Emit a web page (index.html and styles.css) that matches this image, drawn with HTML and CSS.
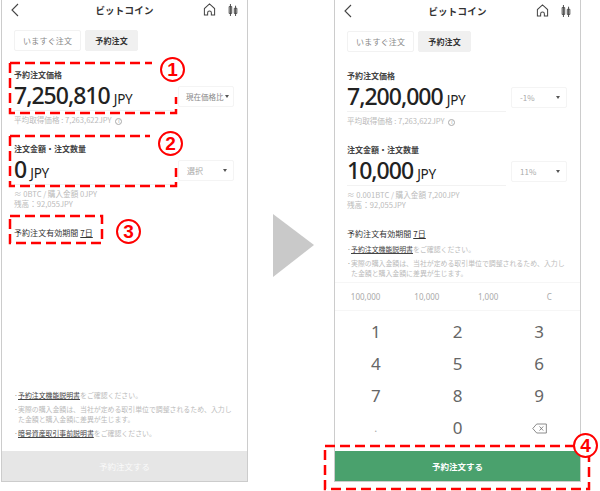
FILE: index.html
```html
<!DOCTYPE html>
<html lang="ja">
<head>
<meta charset="utf-8">
<title>ビットコイン 予約注文</title>
<link rel="stylesheet" href="styles.css">
</head>
<body>
<main class="stage">
  <section class="phone phone-a">
    <header class="nav">
      <svg class="back" viewBox="0 0 10 14"><path d="M8 1 2 7l6 6"/></svg>
      <h1 class="title">ビットコイン</h1>
      <div class="nav-icons">
        <svg class="home" viewBox="0 0 14 14"><path d="M1.500 13V6L7 1l5.500 5v7h-3.500v-2.500a2 2 0 0 0-4 0V13z"/></svg>
        <svg class="chart" viewBox="0 0 14 14"><path d="M4 0v14M10 2v12M2.500 3h3v8h-3zM8.500 5h3v6h-3z"/></svg>
      </div>
    </header>
    <div class="tabs"><span class="tab">いますぐ注文</span><span class="tab tab-on">予約注文</span></div>
    <div class="field field-price">
      <div class="label">予約注文価格</div>
      <div class="row">
        <div class="value"><b>7,250,810</b> <span>JPY</span></div>
        <div class="select select-narrow">現在価格比<i></i></div>
      </div>
      <div class="sub">平均取得価格 : 7,263,622JPY <em>i</em></div>
    </div>
    <div class="field field-amount">
      <div class="label">注文金額・注文数量</div>
      <div class="row">
        <div class="value"><b>0</b> <span>JPY</span></div>
        <div class="select">選択<i></i></div>
      </div>
      <div class="sub sub-tall">≈ 0BTC / 購入金額 0JPY<br>残高：92,055JPY</div>
    </div>
    <div class="period">予約注文有効期間 <u>7日</u></div>
    <ul class="notes notes-bottom">
      <li><u>予約注文機能説明書</u>をご確認ください。</li>
      <li>実際の購入金額は、当社が定める取引単位で調整されるため、入力した金額と購入金額に差異が生じます。</li>
      <li><u>暗号資産取引事前説明書</u>をご確認ください。</li>
    </ul>
    <div class="submit submit-off">予約注文する</div>
  </section>

  <svg class="arrow" viewBox="0 0 41 63"><path d="M0 0 41 31 0 63z"/></svg>

  <section class="phone phone-b">
    <header class="nav">
      <svg class="back" viewBox="0 0 10 14"><path d="M8 1 2 7l6 6"/></svg>
      <h1 class="title">ビットコイン</h1>
      <div class="nav-icons">
        <svg class="home" viewBox="0 0 14 14"><path d="M1.500 13V6L7 1l5.500 5v7h-3.500v-2.500a2 2 0 0 0-4 0V13z"/></svg>
        <svg class="chart" viewBox="0 0 14 14"><path d="M4 0v14M10 2v12M2.500 3h3v8h-3zM8.500 5h3v6h-3z"/></svg>
      </div>
    </header>
    <div class="tabs"><span class="tab">いますぐ注文</span><span class="tab tab-on">予約注文</span></div>
    <div class="field field-price">
      <div class="label">予約注文価格</div>
      <div class="row">
        <div class="value"><b>7,200,000</b> <span>JPY</span></div>
        <div class="select">-1%<i></i></div>
      </div>
      <div class="sub">平均取得価格 : 7,263,622JPY <em>i</em></div>
    </div>
    <div class="field field-amount">
      <div class="label">注文金額・注文数量</div>
      <div class="row">
        <div class="value"><b>10,000</b> <span>JPY</span></div>
        <div class="select">11%<i></i></div>
      </div>
      <div class="sub sub-tall">≈ 0.001BTC / 購入金額 7,200JPY<br>残高：92,055JPY</div>
    </div>
    <div class="period">予約注文有効期間 <u>7日</u></div>
    <ul class="notes">
      <li><u>予約注文機能説明書</u>をご確認ください。</li>
      <li>実際の購入金額は、当社が定める取引単位で調整されるため、入力した金額と購入金額に差異が生じます。</li>
    </ul>
    <div class="shortcuts"><span>100,000</span><span>10,000</span><span>1,000</span><span>C</span></div>
    <div class="keypad">
      <span>1</span><span>2</span><span>3</span>
      <span>4</span><span>5</span><span>6</span>
      <span>7</span><span>8</span><span>9</span>
      <span class="dot">.</span><span>0</span>
      <span><svg class="del" viewBox="0 0 16 11"><path d="M5 .7h10.300v9.600H5L.8 5.500zM8 3.300l4 4.400M12 3.300l-4 4.400"/></svg></span>
    </div>
    <div class="submit">予約注文する</div>
  </section>

  <svg class="marks" viewBox="0 0 600 491">
    <path d="M10 63H152M10 63V113H176V97"/>
    <path d="M10 136H150M10 136V186H176V168"/>
    <path d="M10 216H102V243H10z"/>
    <path d="M325 446H589V489H325z"/>
  </svg>
  <span class="badge badge-1">1</span>
  <span class="badge badge-2">2</span>
  <span class="badge badge-3">3</span>
  <span class="badge badge-4">4</span>
</main>
</body>
</html>
```
FILE: styles.css
```css
* { box-sizing: border-box; }
html, body { margin: 0; height: 100%; background: #fff; overflow: hidden; }
body { font-family: "Noto Sans CJK JP", "Noto Sans", sans-serif; color: #333; }

.stage { position: relative; width: 600px; height: 491px; display: flex; align-items: flex-end; padding: 0 0 9px 1px; }

.phone {
  width: 247px; display: flex; flex-direction: column;
  border: 1px solid #ccc; border-top: 0;
}
.phone-a { height: 483px; margin-top: -1px; }
.phone-b { height: 482px; margin-left: 86px; }

.nav { height: 22px; display: grid; grid-template-columns: 1fr auto 1fr; align-items: center; padding: 0 8px; flex: none; }
.back { width: 10px; height: 14px; }
.back, .home, .chart { fill: none; stroke: #444; stroke-width: 1.100; }
.title { margin: 0; font-size: 9.500px; font-weight: 700; text-align: center; letter-spacing: .2px; color: #333; }
.nav-icons { display: flex; justify-content: flex-end; gap: 11px; }
.home { width: 13px; height: 13px; }
.chart { width: 12px; height: 14px; }

.tabs { display: flex; gap: 4px; margin: 9px 0 0 12px; flex: none; }
.tab { height: 21px; padding: 0 8px; font-size: 8px; letter-spacing: .2px; line-height: 19px; color: #888; border: 1px solid #f2f2f2; border-radius: 2px; }
.tab-on { background: #f0f0f0; border-color: #f0f0f0; color: #333; font-weight: 700; padding: 0 9px; }

.field { padding: 0 13px 0 12px; flex: none; }
.field-price { margin-top: 18px; }
.field-amount { margin-top: 18px; }
.label { font-size: 8px; font-weight: 700; line-height: 12px; color: #444; }
.row { display: flex; align-items: center; gap: 5px; height: 30px; }
.value {
  flex: 1; min-width: 0; height: 30px; line-height: 29px; white-space: nowrap; color: #222;
  border-bottom: 1px solid #f2f2f2; font-family: "Noto Sans", sans-serif;
}
.value b { font-size: 23px; font-weight: 500; letter-spacing: -1px; }
.value span { font-size: 13.500px; letter-spacing: -.3px; }
.select {
  width: 56px; height: 21px; flex: none; display: flex; align-items: center; justify-content: space-between;
  padding: 0 6px 0 8px; font-size: 8px; color: #aaa; border: 1px solid #f4f4f4; border-radius: 2px;
}
.select-narrow { font-size: 7.500px; padding: 0 4px 0 7px; color: #888; white-space: nowrap; }
.select i { width: 0; height: 0; flex: none; border: 2.500px solid transparent; border-top: 3px solid #555; border-bottom: 0; }
.sub { font-size: 7.600px; line-height: 10px; color: #bbb; margin-top: 4px; }
.sub-tall { margin-top: 4px; }
.sub em { display: inline-block; width: 7px; height: 7px; border: 1px solid #aaa; border-radius: 50%; font: normal 5px/5px "Noto Sans", sans-serif; text-align: center; color: #999; margin-left: 2px; }

.period { padding: 0 12px; margin-top: 18px; font-size: 8px; letter-spacing: .05px; line-height: 12px; color: #333; flex: none; }

.notes { list-style: none; margin: 4px 0 0; padding: 0 12px; font-size: 6.900px; line-height: 10px; color: #bbb; flex: none; }
.notes li { position: relative; padding-left: 4px; margin-bottom: 4px; }
.notes li::before { content: "·"; position: absolute; left: 0; color: #888; }
.notes u { color: #444; }
.notes-bottom { margin-top: auto; margin-bottom: 9px; }

.shortcuts {
  height: 29px; flex: none; display: grid; grid-template-columns: repeat(4, 1fr);
  align-items: center; text-align: center; font: 8px "Noto Sans", sans-serif; color: #aaa;
  border-top: 1px solid #f6f6f6; border-bottom: 1px solid #f6f6f6;
}
.keypad {
  flex: 1; display: grid; grid-template-columns: repeat(3, 1fr); align-items: center; text-align: center;
  font: 17px "Noto Sans", sans-serif; color: #666; padding: 4px 0 7px;
}
.keypad .dot { color: #aaa; font-size: 11px; }
.del { width: 15px; height: 11px; fill: none; stroke: #777; stroke-width: .9; }

.submit { height: 30px; flex: none; background: #4aa16d; color: #fff; font-size: 8.500px; font-weight: 700; line-height: 30px; text-align: center; }
.submit-off { background: #e6e6e6; color: #fafafa; font-weight: 400; }

.arrow { position: absolute; left: 273px; top: 214px; width: 41px; height: 63px; fill: #c9c9c9; }
.marks { position: absolute; left: 0; top: 0; width: 600px; height: 491px; fill: none; stroke: #f00; stroke-width: 2.500; stroke-dasharray: 10 5; pointer-events: none; }

.badge {
  position: absolute; width: 25px; height: 25px; border: 2px solid #f00; border-radius: 50%; background: #fff;
  color: #f00; font: 700 19px/21px "Liberation Sans", sans-serif; text-align: center;
}
.badge-1 { left: 160px; top: 57px; }
.badge-2 { left: 158px; top: 131px; }
.badge-3 { left: 116px; top: 219px; }
.badge-4 { left: 573px; top: 433px; }
```
